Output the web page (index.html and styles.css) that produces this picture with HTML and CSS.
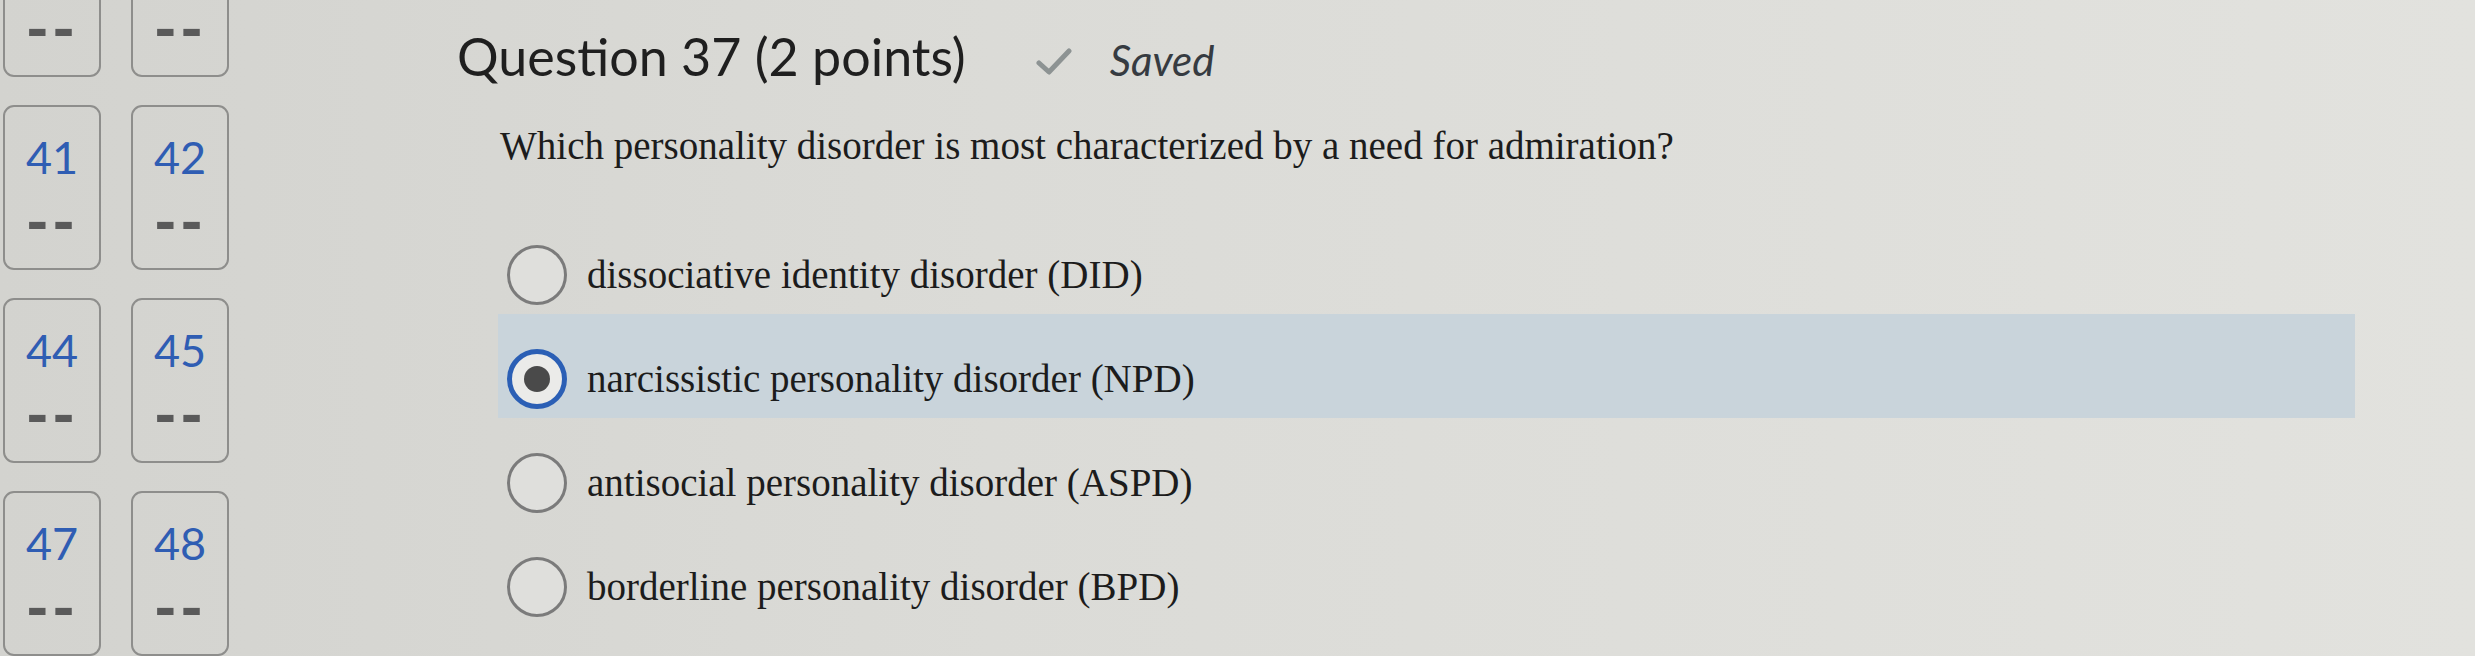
FILE: index.html
```html
<!DOCTYPE html>
<html lang="en">
<head>
<meta charset="utf-8">
<title>Question 37</title>
<link rel="stylesheet" href="styles.css">
</head>
<body>
<div class="page">
  <nav class="qnav" aria-label="Questions">
    <div class="tile tile-cut"><span class="dash">--</span></div>
    <div class="tile tile-cut"><span class="dash">--</span></div>
    <div class="tile"><span class="num">41</span><span class="dash">--</span></div>
    <div class="tile"><span class="num">42</span><span class="dash">--</span></div>
    <div class="tile"><span class="num">44</span><span class="dash">--</span></div>
    <div class="tile"><span class="num">45</span><span class="dash">--</span></div>
    <div class="tile"><span class="num">47</span><span class="dash">--</span></div>
    <div class="tile"><span class="num">48</span><span class="dash">--</span></div>
  </nav>
  <main class="question">
    <div class="q-head">
      <h1 class="q-title">Question 37 (2 points)</h1>
      <span class="saved">
        <svg class="check" width="36" height="28" viewBox="0 0 36 28" aria-hidden="true"><polyline points="3,15 13,24 33,3" fill="none" stroke="#8d9393" stroke-width="5" stroke-linecap="round" stroke-linejoin="round"/></svg>
        <span class="saved-text">Saved</span>
      </span>
    </div>
    <p class="q-text">Which personality disorder is most characterized by a need for admiration?</p>
    <ul class="options">
      <li class="opt"><span class="radio"></span><span class="label">dissociative identity disorder (DID)</span></li>
      <li class="opt selected"><span class="radio"></span><span class="label">narcissistic personality disorder (NPD)</span></li>
      <li class="opt"><span class="radio"></span><span class="label">antisocial personality disorder (ASPD)</span></li>
      <li class="opt"><span class="radio"></span><span class="label">borderline personality disorder (BPD)</span></li>
    </ul>
  </main>
</div>
</body>
</html>
```
FILE: styles.css
```css
html, body {
  margin: 0;
  padding: 0;
}
body {
  height: 656px;
  overflow: hidden;
  background: linear-gradient(90deg, #d3d3cf 0%, #dbdbd7 40%, #e2e2de 100%);
  font-family: Lato, "Liberation Sans", sans-serif;
}
.page {
  display: flex;
  align-items: flex-start;
}
.qnav {
  display: grid;
  grid-template-columns: 98px 98px;
  column-gap: 30px;
  row-gap: 28px;
  margin: -88px 0 0 3px;
}
.tile {
  box-sizing: border-box;
  height: 165px;
  border: 2px solid #8e8e8c;
  border-radius: 11px;
  display: flex;
  flex-direction: column;
  align-items: center;
  padding-top: 25px;
}
.tile-cut {
  padding-top: 75px;
}
.num {
  font-size: 45px;
  line-height: 50px;
  color: #2f5db3;
}
.dash {
  margin-top: 19px;
  font-size: 62px;
  font-weight: 900;
  line-height: 40px;
  letter-spacing: 3px;
  color: #5a5a5a;
}
.question {
  margin-left: 228px;
  flex: 1;
}
.q-head {
  display: flex;
  align-items: baseline;
  margin-top: 26px;
}
.q-title {
  margin: 0;
  font-size: 52px;
  font-weight: 400;
  line-height: 60px;
  color: #1f1f1f;
}
.saved {
  margin-left: 70px;
  display: flex;
  align-items: baseline;
}
.check {
  margin-right: 38px;
}
.saved-text {
  font-size: 42px;
  font-style: italic;
  color: #363b41;
}
.q-text {
  margin: 37px 0 0 43px;
  font-family: "Liberation Serif", "Times New Roman", serif;
  font-size: 39px;
  line-height: 46px;
  color: #1c1c1c;
}
.options {
  list-style: none;
  margin: 41px 0 0 41px;
  padding: 0;
  width: 1857px;
}
.opt {
  display: flex;
  align-items: center;
  gap: 20px;
  box-sizing: border-box;
  height: 104px;
  padding: 35px 0 9px 9px;
  font-family: "Liberation Serif", "Times New Roman", serif;
  font-size: 39px;
  line-height: 46px;
  color: #1c1c1c;
}
.opt.selected {
  background: #c9d4db;
}
.radio {
  flex: none;
  box-sizing: border-box;
  width: 60px;
  height: 60px;
  border: 3px solid #7b7b7b;
  border-radius: 50%;
  background: #dfdfdc;
}
.opt.selected .radio {
  border: 5px solid #2b5fb5;
  background: #ebebe9;
  display: flex;
  align-items: center;
  justify-content: center;
}
.opt.selected .radio::after {
  content: "";
  width: 26px;
  height: 26px;
  border-radius: 50%;
  background: #4a4a4a;
}
```
